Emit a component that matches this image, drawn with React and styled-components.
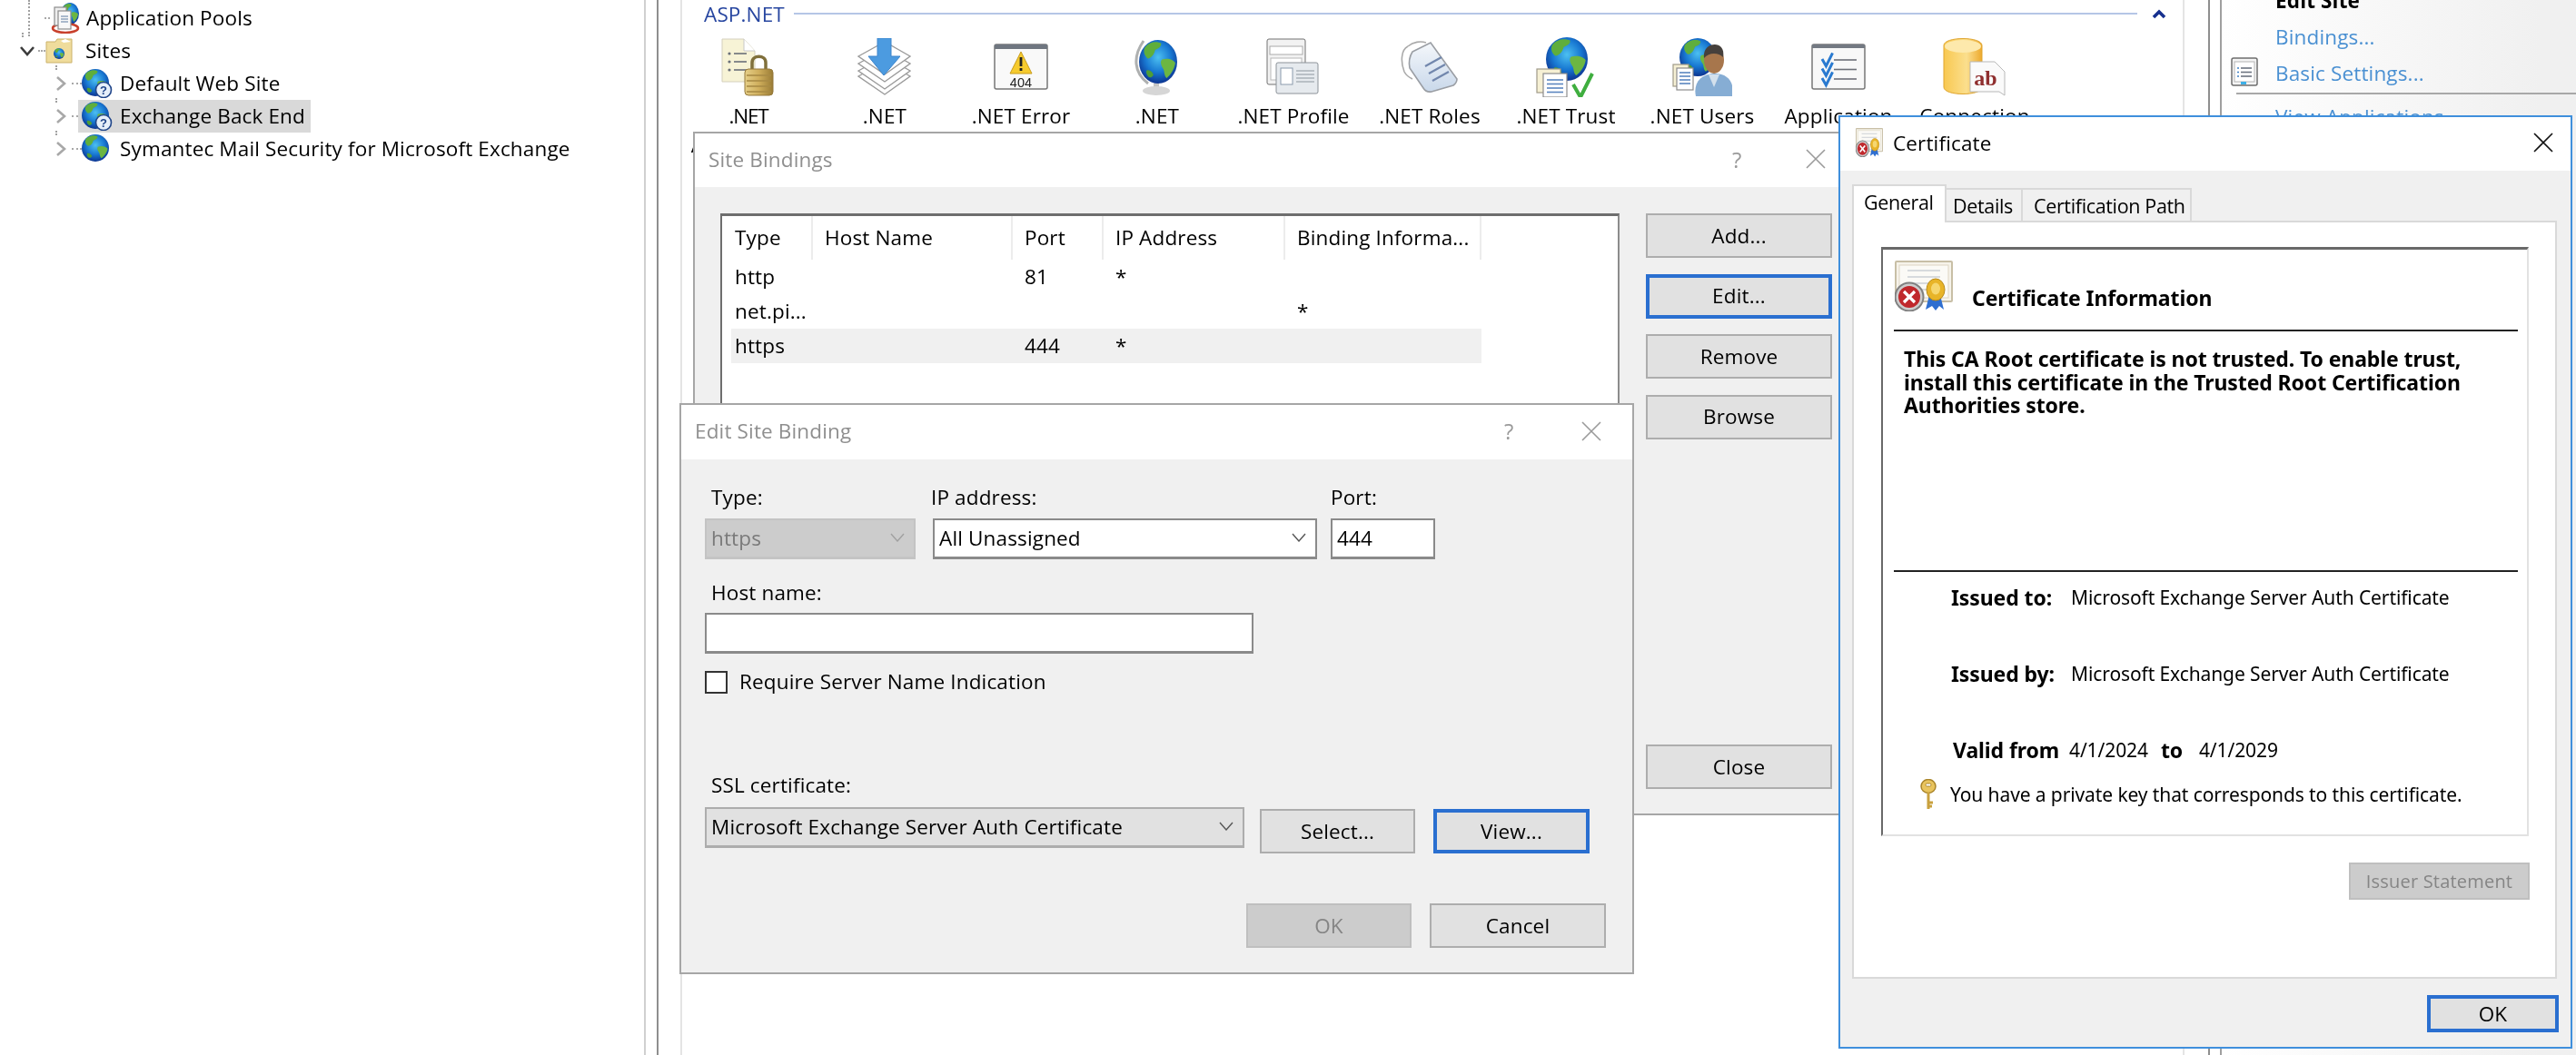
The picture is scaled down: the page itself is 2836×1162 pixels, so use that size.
import React from 'react';
import styled, { createGlobalStyle } from 'styled-components';

const GlobalStyle = createGlobalStyle`
  html, body { margin: 0; padding: 0; background: #fff; }
  body {
    font-family: 'Open Sans', 'Noto Sans', sans-serif;
    font-size: 22.5px;
    letter-spacing: 0.15px;
    color: #000;
  }
  * { box-sizing: border-box; }
`;

const Page = styled.div`
  position: relative;
  width: 2836px;
  height: 1162px;
  overflow: hidden;
  display: flex;
  background: #fff;
  filter: blur(0.5px);
`;

/* ---------- tree ---------- */
const TreePane = styled.div`
  flex: 0 0 711px;
  padding-top: 2px;
  border-right: 2px solid #d0d0d0;
`;

const TreeRow = styled.div`
  position: relative;
  height: 36px;
  display: flex;
  align-items: center;
  padding-left: ${(p) => p.$indent}px;

  &::before {
    content: '';
    position: absolute;
    left: ${(p) => p.$indent + 6}px;
    top: -2px;
    height: ${(p) => (p.$rail ? 40 : 3)}px;
    border-left: 2px dotted #a0a0a0;
  }
`;

const Twist = styled.span`
  flex: 0 0 24px;
  display: flex;
  justify-content: center;
`;

const Dots = styled.span`
  flex: 0 0 ${(p) => p.$w}px;
  border-top: 2px dotted #a8a8a8;
`;

const TreeLabel = styled.span`
  padding: 0 6px 0 0;
  line-height: 36px;
  margin-left: ${(p) => p.$gap}px;
`;

const SelectedNode = styled.span`
  display: flex;
  align-items: center;
  height: 36px;
  padding-left: 4px;
  margin-left: -4px;
  background: ${(p) => (p.$on ? '#d9d9d9' : 'transparent')};
`;

/* ---------- centre pane ---------- */
const MainPane = styled.div`
  flex: 0 0 1710px;
  margin-left: 12px;
  padding: 0 26px 0 24px;
  border-left: 2px solid #8f8f8f;
  border-right: 2px solid #8f8f8f;
`;

const Features = styled.div`
  height: 100%;
  border-left: 2px solid #e4e4e4;
  border-right: 2px solid #e4e4e4;
`;

const SectionHead = styled.div`
  height: 30px;
  display: flex;
  align-items: center;
  padding: 0 18px 0 24px;
  color: #2746a0;
`;

const SectionRule = styled.span`
  flex: 1;
  margin: 0 16px 0 10px;
  border-top: 2px solid #b5c6e6;
`;

const IconGrid = styled.div`
  display: grid;
  grid-template-columns: repeat(10, 150px);
  grid-auto-rows: 150px;
  margin: 5px 0 0 -2px;
`;

const Feature = styled.div`
  display: flex;
  flex-direction: column;
  align-items: center;
  text-align: center;
  padding-top: 7px;
`;

const FeatureIcon = styled.div`
  height: 64px;
  display: flex;
  align-items: center;
  justify-content: center;
`;

const FeatureLabel = styled.div`
  width: 146px;
  margin-top: 6px;
  line-height: 32px;
  letter-spacing: ${(p) => (p.$tight ? '-1.2px' : 'inherit')};
`;

/* ---------- actions ---------- */
const ActionsPane = styled.div`
  flex: 1;
  margin-left: 11px;
  border-left: 2px solid #a0a0a0;
  background: linear-gradient(to right, #fff 0%, #f0f0f0 90%);
  padding-left: 10px;
`;

const ActionRow = styled.div`
  height: 40px;
  display: flex;
  align-items: center;
  padding-left: 49px;
  position: relative;
  color: ${(p) => (p.$head ? '#000' : '#4a90d2')};
  font-weight: ${(p) => (p.$head ? 700 : 400)};
  margin-top: ${(p) => (p.$first ? -20 : 0)}px;
`;

const ActionIcon = styled.span`
  position: absolute;
  left: 0;
  top: 3px;
`;

const ActionRule = styled.div`
  height: 2px;
  margin: 2px 0 4px 6px;
  background: #a8a8a8;
`;

/* ---------- windows ---------- */
const Window = styled.div`
  position: absolute;
  left: ${(p) => p.$x}px;
  top: ${(p) => p.$y}px;
  width: ${(p) => p.$w}px;
  height: ${(p) => p.$h}px;
  display: flex;
  flex-direction: column;
  background: #f0f0f0;
  border: 2px solid ${(p) => (p.$active ? '#3f8fdc' : '#a6a6a6')};
`;

const TitleBar = styled.div`
  flex: 0 0 ${(p) => p.$h || 60}px;
  display: flex;
  align-items: center;
  background: #fff;
  padding: 0 ${(p) => p.$pr}px 3px ${(p) => p.$pl}px;
  color: ${(p) => (p.$active ? '#000' : '#8f8f8f')};
`;

const TitleText = styled.span`
  flex: 1;
  margin-left: ${(p) => p.$ml || 0}px;
`;

const TitleHelp = styled.span`
  width: ${(p) => p.$w}px;
  font-size: 24px;
  color: #9a9a9a;
`;

/* ---------- site bindings ---------- */
const BindingsBody = styled.div`
  flex: 1;
  display: flex;
  padding: 29px 0 27px 28px;
`;

const ListBox = styled.div`
  flex: 0 0 990px;
  height: 590px;
  padding-left: 10px;
  background: #fff;
  border-top: 3px solid #6e6e6e;
  border-left: 2px solid #6e6e6e;
  border-right: 2px solid #8c8c8c;
`;

const ListGrid = styled.div`
  display: grid;
  grid-template-columns: 90px 220px 100px 200px 216px;
  grid-template-rows: 48px;
  grid-auto-rows: 38px;
`;

const ColumnHead = styled.div`
  height: 48px;
  padding-left: 13px;
  line-height: 48px;
  border-right: 2px solid #ececec;
  &:first-child { padding-left: 4px; }
`;

const Cell = styled.div`
  padding-left: 13px;
  line-height: 38px;
  background: ${(p) => (p.$sel ? '#f0f0f0' : 'transparent')};
  &:nth-child(5n + 1) { padding-left: 4px; }
`;

const ButtonColumn = styled.div`
  flex: 0 0 205px;
  margin-left: 29px;
  display: flex;
  flex-direction: column;
  gap: 17.5px;
`;

const Button = styled.div`
  flex: 0 0 auto;
  width: ${(p) => p.$w}px;
  height: ${(p) => p.$h || 49}px;
  margin-top: ${(p) => p.$mt || 0}px;
  padding-bottom: 1px;
  display: flex;
  align-items: center;
  justify-content: center;
  background: ${(p) => (p.$off ? '#cccccc' : '#e1e1e1')};
  color: ${(p) => (p.$off ? '#858585' : '#000')};
  border: ${(p) => (p.$focus ? '4px solid #2a6fd0' : `2px solid ${p.$off ? '#bfbfbf' : '#adadad'}`)};
`;

const Spacer = styled.div`
  flex: 1;
`;

/* ---------- edit binding ---------- */
const EditBody = styled.div`
  flex: 1;
  padding: 29px 29px 0 26px;
`;

const FieldRow = styled.div`
  display: flex;
  align-items: flex-start;
  gap: ${(p) => p.$gap || 0}px;
  margin-top: ${(p) => p.$mt || 0}px;
`;

const Field = styled.div`
  width: ${(p) => p.$w}px;
  margin-left: ${(p) => p.$ml || 0}px;
`;

const FieldLabel = styled.div`
  height: 30px;
  line-height: 26px;
  margin: 0 0 ${(p) => p.$mb ?? 6}px ${(p) => p.$ml ?? 7}px;
`;

const Combo = styled.div`
  height: 45px;
  display: flex;
  align-items: center;
  justify-content: space-between;
  padding: 0 10px 2px 5px;
  background: ${(p) => (p.$tone === 'off' ? '#cccccc' : p.$tone === 'flat' ? '#e1e1e1' : '#fff')};
  color: ${(p) => (p.$tone === 'off' ? '#7a7a7a' : '#000')};
  border: 2px solid ${(p) => (p.$tone === 'off' ? '#c4c4c4' : p.$tone === 'flat' ? '#adadad' : '#8a8a8a')};
  border-bottom-width: 3px;
`;

const TextBox = styled(Combo)``;

const CheckRow = styled.div`
  display: flex;
  align-items: center;
  gap: 13px;
  height: 25px;
  margin-top: 19px;
`;

const CheckBox = styled.span`
  width: 25px;
  height: 25px;
  background: #fff;
  border: 2px solid #333;
`;

const CheckText = styled.span`
  margin-top: -3px;
`;

const ButtonFooter = styled.div`
  display: flex;
  justify-content: flex-end;
  gap: 20px;
  margin-top: 55px;
`;

/* ---------- certificate ---------- */
const CertBody = styled.div`
  flex: 1;
  display: flex;
  flex-direction: column;
  padding: 15px 13px 16px 13px;
`;

const Tabs = styled.div`
  display: flex;
  height: 40px;
  align-items: flex-end;
`;

const Tab = styled.div`
  height: ${(p) => (p.$on ? 42 : 36)}px;
  width: ${(p) => p.$w}px;
  padding-left: ${(p) => p.$pl}px;
  margin-bottom: ${(p) => (p.$on ? -2 : 0)}px;
  position: relative;
  z-index: ${(p) => (p.$on ? 2 : 0)};
  line-height: 36px;
  font-size: 21.5px;
  letter-spacing: -0.35px;
  background: ${(p) => (p.$on ? '#fff' : '#f0f0f0')};
  border: 2px solid #d9d9d9;
  border-width: 2px 2px 0 ${(p) => (p.$first ? 2 : 0)}px;
`;

const TabPanel = styled.div`
  width: 776px;
  height: 835px;
  padding: 27px 0 0 30px;
  background: #fff;
  border: 2px solid #d9d9d9;
`;

const InfoBox = styled.div`
  width: 713px;
  height: 649px;
  padding: 19px 0 0 13px;
  border-style: solid;
  border-width: 3px 2px 2px 2px;
  border-color: #696969 #e2e2e2 #e2e2e2 #696969;
  font-family: 'Noto Sans', sans-serif;
  font-size: 21px;
  letter-spacing: -0.1px;
`;

const InfoHead = styled.div`
  display: flex;
  align-items: flex-end;
  gap: 21px;
  height: 56px;
  font-size: 23px;
  font-weight: 700;
  line-height: 30px;
  padding-bottom: 7px;
`;

const InfoRule = styled.div`
  width: 687px;
  height: 2px;
  margin: ${(p) => p.$mt}px 0 0 -1px;
  background: #222;
`;

const InfoMessage = styled.div`
  width: 640px;
  height: 243px;
  margin: 18px 0 2px 10px;
  font-size: 23px;
  font-weight: 700;
  line-height: 25.7px;
`;

const InfoRows = styled.div`
  display: flex;
  flex-direction: column;
  gap: 54px;
  margin-top: 13px;
`;

const InfoRow = styled.div`
  display: flex;
  height: 30px;
  line-height: 30px;
  padding-left: ${(p) => p.$pl || 62}px;
`;

const InfoKey = styled.b`
  width: ${(p) => p.$w}px;
  margin-left: ${(p) => p.$ml || 0}px;
  flex: 0 0 auto;
  font-size: 23px;
`;

const KeyRow = styled.div`
  display: flex;
  align-items: center;
  height: 34px;
  gap: 15px;
  margin: 17px 0 0 28px;
`;

const IssuerRow = styled.div`
  display: flex;
  justify-content: flex-end;
  width: 714px;
  margin-top: 29px;
`;

const IssuerButton = styled(Button)`
  font-size: 20px;
  letter-spacing: 0.2px;
`;

const CertFooter = styled.div`
  display: flex;
  justify-content: flex-end;
  margin-top: 18px;
`;

/* ---------- drawings ---------- */
const Defs = () => (
  <svg width="0" height="0" style={{ position: 'absolute' }}>
    <defs>
      <radialGradient id="sea" cx="0.5" cy="0.4" r="0.62">
        <stop offset="0" stopColor="#4cc0f0" />
        <stop offset="0.55" stopColor="#1878d2" />
        <stop offset="1" stopColor="#0b2f8c" />
      </radialGradient>
      <linearGradient id="gold" x1="0" x2="1" y1="0" y2="0">
        <stop offset="0" stopColor="#e6cf88" />
        <stop offset="0.5" stopColor="#cfae5c" />
        <stop offset="1" stopColor="#9a7c35" />
      </linearGradient>
      <linearGradient id="can" x1="0" x2="1" y1="0" y2="0">
        <stop offset="0" stopColor="#f8c850" />
        <stop offset="0.6" stopColor="#fbdf8e" />
        <stop offset="1" stopColor="#eda92d" />
      </linearGradient>
      <linearGradient id="cloth" x1="0" x2="0" y1="0" y2="1">
        <stop offset="0" stopColor="#f4f7fb" />
        <stop offset="1" stopColor="#c9d8ea" />
      </linearGradient>
    </defs>
  </svg>
);

const Globe = ({ cx, cy, r, ry }) => {
  const h = ry || r;
  return (
    <g transform={`translate(${cx} ${cy}) scale(${r / 20} ${h / 20})`}>
      <circle r="20" fill="url(#sea)" />
      <path d="M-14-13c5-6 13-6 17-4 1 3-3 5-6 6-1 4-4 8-8 8-3-2-5-6-3-10z" fill="#5fae3c" />
      <path d="M4-2c6-2 12 0 14 3-1 6-5 11-9 14-3-2-2-7-4-9-2-3-3-6-1-8z" fill="#6cb642" />
      <path d="M-12 8c3-1 6 1 7 4-1 2-3 3-5 2-2-2-3-4-2-6z" fill="#4f9e36" />
    </g>
  );
};

const Sheet = ({ x, y, w, h, fill = '#fff', stroke = '#8c8c8c' }) => (
  <rect x={x} y={y} width={w} height={h} fill={fill} stroke={stroke} strokeWidth="1.2" />
);

const Lines = ({ x, y, w, n, step = 5, color = '#5b86c0', sw = 1.6 }) => (
  <g stroke={color} strokeWidth={sw}>
    {Array.from({ length: n }).map((_, i) => (
      <line key={i} x1={x} x2={x + w} y1={y + i * step} y2={y + i * step} />
    ))}
  </g>
);

const AuthIcon = () => (
  <svg width="60" height="64" viewBox="0 0 60 64">
    <path d="M1 1h24l12 13v34H1z" fill="#f7f3d6" stroke="#d4d0bd" />
    <path d="M25 1v13h12" fill="#fff" stroke="#c8c8c8" />
    <g fill="#6a6f78">
      <circle cx="9" cy="17" r="1.6" /><circle cx="9" cy="26" r="1.6" /><circle cx="9" cy="35" r="1.6" />
    </g>
    <Lines x={14} y={17} w={14} n={3} step={9} color="#6a6f78" />
    <path d="M34 36v-9c0-9 15-9 15 0v9" fill="none" stroke="#80703c" strokeWidth="3.5" />
    <rect x="26" y="34" width="31" height="29" rx="4" fill="url(#gold)" stroke="#94793c" />
    <Lines x={28} y={41} w={27} n={4} step={6} color="#a98b45" />
  </svg>
);

const Stack = ({ y }) => (
  <path d={`M1 ${y}L30 ${y - 16}L58 ${y}L30 ${y + 20}Z`} fill="#fff" stroke="#9a9a9a" strokeWidth="1.4" />
);

const CompileIcon = () => (
  <svg width="60" height="64" viewBox="0 0 60 64">
    <Stack y={42} /><Stack y={36} /><Stack y={28} /><Stack y={20} />
    <path d="M22 0h15v20h10L29 41 12 20h10z" fill="#4c9be0" stroke="#3d85cc" />
  </svg>
);

const ErrorIcon = () => (
  <svg width="60" height="52" viewBox="0 0 60 52">
    <rect x="1" y="1" width="58" height="49" rx="2" fill="#f9f9f9" stroke="#777" strokeWidth="1.5" />
    <rect x="1" y="1" width="58" height="5" fill="#6f7680" />
    <path d="M30 9L42 33H18z" fill="#f6cb2f" stroke="#c89b1d" />
    <rect x="28.6" y="15" width="2.8" height="10" fill="#222" /><rect x="28.6" y="27" width="2.8" height="3" fill="#222" />
    <text x="30" y="48" textAnchor="middle" fontFamily="'Liberation Sans', sans-serif" fontSize="14.5" fill="#222">404</text>
  </svg>
);

const GlobeIcon = () => (
  <svg width="50" height="64" viewBox="0 0 50 64">
    <path d="M10 3C-2 20-1 38 15 50" fill="none" stroke="#aeb0b0" strokeWidth="3" />
    <Globe cx={26} cy={26} r={21} ry={24} />
    <rect x="21" y="50" width="6" height="6" fill="#c4c4c4" />
    <ellipse cx="24" cy="58" rx="15" ry="5" fill="#d6d6d6" />
  </svg>
);

const ProfileIcon = () => (
  <svg width="60" height="64" viewBox="0 0 60 64">
    <rect x="1" y="1" width="42" height="50" rx="2" fill="#f2f2f2" stroke="#707070" />
    <rect x="4" y="9" width="36" height="9" fill="#fff" stroke="#aaa" />
    <rect x="5" y="22" width="34" height="24" fill="#fff" stroke="#b8b8b8" />
    <rect x="11" y="27" width="46" height="34" rx="2" fill="#e6eaee" stroke="#8c9298" />
    <rect x="16" y="33" width="13" height="18" fill="#fff" stroke="#8a9aac" />
    <Lines x={33} y={36} w={20} n={4} step={4} color="#9aa3ac" sw={1.2} />
  </svg>
);

const RolesIcon = () => (
  <svg width="64" height="58" viewBox="0 0 64 58">
    <path d="M8 6C0 10 0 24 4 34c2 4 5 6 9 8" fill="none" stroke="#a9a9a9" strokeWidth="1.6" />
    <path d="M8 6c6-5 14-6 20-4" fill="none" stroke="#a9a9a9" strokeWidth="1.6" />
    <path d="M13 12L33 2l29 40q0 4-4 7l-24 7q-6 1-9-4L10 30q-2-10 3-18z" fill="url(#cloth)" stroke="#9a9ea4" strokeWidth="1.6" />
    <g stroke="#7287ad" strokeWidth="2.2">
      <line x1="27" y1="28" x2="45" y2="18" /><line x1="31" y1="36" x2="49" y2="26" /><line x1="35" y1="44" x2="53" y2="34" />
    </g>
  </svg>
);

const CheckMark = ({ x, y, s = 1, color = '#3fae3f', w = 4 }) => (
  <path d={`M${x} ${y}l${8 * s} ${14 * s}l${13 * s} ${-26 * s}`} fill="none" stroke={color} strokeWidth={w} />
);

const TrustIcon = () => (
  <svg width="66" height="66" viewBox="0 0 66 66">
    <Globe cx={34} cy={24} r={23} ry={24} />
    <Sheet x={1} y={35} w={26} h={26} fill="#f6f0d4" stroke="#a09a88" />
    <Sheet x={8} y={40} w={26} h={26} />
    <Lines x={12} y={47} w={18} n={4} step={4.5} />
    <CheckMark x={41} y={52} s={1} />
  </svg>
);

const UsersIcon = () => (
  <svg width="66" height="64" viewBox="0 0 66 64">
    <Globe cx={28} cy={21} r={20} ry={21} />
    <Sheet x={1} y={29} w={17} h={24} fill="#f6f0d4" stroke="#a09a88" />
    <Sheet x={5} y={33} w={18} h={24} />
    <Lines x={8} y={38} w={12} n={4} step={4} />
    <path d="M26 64c-3-14 5-25 21-25s22 12 19 25z" fill="#86add4" />
    <path d="M40 40l6 14 6-14z" fill="#d3e0ec" />
    <ellipse cx="46" cy="24" rx="11" ry="15" fill="#a7764c" />
    <path d="M35 22c-1-12 7-15 12-15s11 4 9 14c-5-5-15-6-21 1z" fill="#46403c" />
  </svg>
);

const ListIcon = () => (
  <svg width="60" height="52" viewBox="0 0 60 52">
    <rect x="1" y="1" width="58" height="49" rx="2" fill="#f8f8f8" stroke="#777" strokeWidth="1.5" />
    <rect x="1" y="1" width="58" height="4" fill="#737982" />
    <Lines x={25} y={18} w={25} n={3} step={10.5} color="#6d7078" />
    <CheckMark x={12} y={17} s={0.55} color="#2a7ad0" w={3} />
    <CheckMark x={12} y={27.5} s={0.55} color="#2a7ad0" w={3} />
    <CheckMark x={12} y={38} s={0.55} color="#2a7ad0" w={3} />
  </svg>
);

const ConnectionIcon = () => (
  <svg width="70" height="64" viewBox="0 0 70 64">
    <path d="M1 8c0-10 42-10 42 0v46c0 10-42 10-42 0z" fill="url(#can)" stroke="#dfa52f" />
    <ellipse cx="22" cy="9" rx="20" ry="7" fill="#fde9ac" />
    <path d="M30 26h27l11 11v26l-6-4H30z" fill="#fafafa" stroke="#b8b8b8" />
    <text x="47" y="52" textAnchor="middle" fontFamily="'Liberation Serif', serif" fontWeight="700" fontSize="24" fill="#8f2e2e">ab</text>
  </svg>
);

const PoolsIcon = () => (
  <svg width="34" height="34" viewBox="0 0 34 34">
    <Globe cx={22} cy={12} r={10} ry={12} />
    <ellipse cx="17" cy="28" rx="14" ry="5" fill="none" stroke="#c8402c" strokeWidth="2.5" />
    <Sheet x={5} y={5} w={13} h={20} fill="#eeeeee" />
    <Sheet x={9} y={9} w={14} h={20} fill="#f8f8f8" />
    <Lines x={12} y={15} w={8} n={3} step={3} color="#5c7aa0" sw={1} />
  </svg>
);

const FolderIcon = () => (
  <svg width="30" height="28" viewBox="0 0 30 28">
    <path d="M1 4h10l2-3h16v26H1z" fill="#efdc9c" stroke="#cbb26a" />
    <path d="M17 3l5-2 6 3-8 1z" fill="#fff" />
    <Globe cx={15} cy={17} r={6} />
  </svg>
);

const SiteIcon = ({ unknown }) => (
  <svg width="34" height="32" viewBox="0 0 34 32">
    <Globe cx={15} cy={15} r={15} />
    {unknown && (
      <g>
        <circle cx="24" cy="23" r="8.5" fill="#e6effa" stroke="#21468a" strokeWidth="1.6" />
        <text x="24" y="28" textAnchor="middle" fontFamily="'Liberation Sans', sans-serif" fontSize="13" fontWeight="700" fill="#21468a">?</text>
      </g>
    )}
  </svg>
);

const TwistDown = () => (
  <svg width="18" height="12" viewBox="0 0 18 12">
    <path d="M2 2l7 8 7-8" fill="none" stroke="#3c3c3c" strokeWidth="2.6" />
  </svg>
);

const TwistRight = () => (
  <svg width="12" height="18" viewBox="0 0 12 18">
    <path d="M2 2l8 7-8 7" fill="none" stroke="#a8a8a8" strokeWidth="2.6" />
  </svg>
);

const FoldUp = () => (
  <svg width="16" height="12" viewBox="0 0 16 12">
    <path d="M2 10l6-6 6 6" fill="none" stroke="#17308f" strokeWidth="3.6" />
  </svg>
);

const ComboArrow = ({ color = '#555' }) => (
  <svg width="16" height="10" viewBox="0 0 16 10">
    <path d="M1 1l7 8 7-8" fill="none" stroke={color} strokeWidth="1.4" />
  </svg>
);

const CloseX = ({ color = '#9a9a9a', size = 22 }) => (
  <svg width={size} height={size} viewBox="0 0 22 22">
    <path d="M1 1l20 20M21 1L1 21" stroke={color} strokeWidth="1.6" />
  </svg>
);

const SettingsIcon = () => (
  <svg width="30" height="32" viewBox="0 0 30 32">
    <rect x="1" y="1" width="28" height="30" rx="2" fill="#f4f4f4" stroke="#6d6d6d" strokeWidth="1.5" />
    <rect x="4" y="5" width="22" height="22" fill="#fff" stroke="#b4b4b4" />
    <Lines x={11} y={12} w={12} n={3} step={4.5} color="#6c7480" />
    <Lines x={7} y={12} w={2} n={3} step={4.5} color="#3c7fc4" />
    <rect x="11" y="27" width="6" height="3" fill="#3cb0e8" />
  </svg>
);

const CertIcon = ({ w, h }) => (
  <svg width={w} height={h} viewBox="0 0 64 56" preserveAspectRatio="none">
    <rect x="1" y="1" width="62" height="44" rx="1" fill="#f6f3ea" stroke="#c8bfa6" strokeWidth="2" />
    <rect x="5" y="5" width="54" height="36" fill="#fbfaf6" stroke="#ddd6c4" />
    <Lines x={14} y={11} w={36} n={4} step={7} color="#b4bac4" sw={1.2} />
    <path d="M38 38l-4 16 7-4 4 5 4-5 5 4-4-16z" fill="#2f6fd0" />
    <ellipse cx="45" cy="32" rx="10" ry="12" fill="#e8b428" stroke="#b88a18" />
    <ellipse cx="45" cy="31" rx="5" ry="6.5" fill="#f6d770" />
    <circle cx="16" cy="40" r="15.5" fill="#cdcdcd" stroke="#808080" strokeWidth="2" />
    <circle cx="16" cy="40" r="12" fill="#c0282c" />
    <path d="M10 34l12 12M22 34L10 46" stroke="#fff" strokeWidth="3.2" />
  </svg>
);

const KeyIcon = () => (
  <svg width="18" height="34" viewBox="0 0 18 34">
    <ellipse cx="9" cy="8" rx="8" ry="7.5" fill="#e9c45e" stroke="#a9842a" strokeWidth="1.5" />
    <rect x="6" y="5" width="6" height="3" rx="1.5" fill="#fff" stroke="#a9842a" />
    <path d="M9 15v18M9 26h5M9 30h4" stroke="#c9a13e" strokeWidth="3" />
  </svg>
);

const features = [
  { label: '.NET Authorization Rules', icon: <AuthIcon />, tight: true },
  { label: '.NET Compilation', icon: <CompileIcon /> },
  { label: '.NET Error Pages', icon: <ErrorIcon /> },
  { label: '.NET Globalization', icon: <GlobeIcon /> },
  { label: '.NET Profile', icon: <ProfileIcon /> },
  { label: '.NET Roles', icon: <RolesIcon /> },
  { label: '.NET Trust Levels', icon: <TrustIcon /> },
  { label: '.NET Users', icon: <UsersIcon /> },
  { label: 'Application Settings', icon: <ListIcon /> },
  { label: 'Connection Strings', icon: <ConnectionIcon /> },
  { label: 'Machine Key', icon: null, tight: true },
];

const bindings = [
  ['http', '', '81', '*', ''],
  ['net.pi...', '', '', '', '*'],
  ['https', '', '444', '*', ''],
];

const SiteBindings = () => (
  <Window $x={763} $y={145} $w={1270} $h={753}>
    <TitleBar $h={59} $pl={15} $pr={21}>
      <TitleText>Site Bindings</TitleText>
      <TitleHelp $w={81}>?</TitleHelp>
      <CloseX />
    </TitleBar>
    <BindingsBody>
      <ListBox>
        <ListGrid>
          {['Type', 'Host Name', 'Port', 'IP Address', 'Binding Informa...'].map((h) => (
            <ColumnHead key={h}>{h}</ColumnHead>
          ))}
          {bindings.map((row, r) =>
            row.map((c, i) => (
              <Cell key={`${r}-${i}`} $sel={r === 2}>{c}</Cell>
            ))
          )}
        </ListGrid>
      </ListBox>
      <ButtonColumn>
        <Button $w={205}>Add...</Button>
        <Button $w={205} $focus>Edit...</Button>
        <Button $w={205}>Remove</Button>
        <Button $w={205}>Browse</Button>
        <Spacer />
        <Button $w={205}>Close</Button>
      </ButtonColumn>
    </BindingsBody>
  </Window>
);

const EditBinding = () => (
  <Window $x={748} $y={444} $w={1051} $h={629}>
    <TitleBar $pl={15} $pr={34}>
      <TitleText>Edit Site Binding</TitleText>
      <TitleHelp $w={85}>?</TitleHelp>
      <CloseX />
    </TitleBar>
    <EditBody>
      <FieldRow>
        <Field $w={232}>
          <FieldLabel>Type:</FieldLabel>
          <Combo $tone="off">https<ComboArrow color="#a0a0a0" /></Combo>
        </Field>
        <Field $w={423} $ml={19}>
          <FieldLabel $ml={-2}>IP address:</FieldLabel>
          <Combo>All Unassigned<ComboArrow /></Combo>
        </Field>
        <Field $w={115} $ml={15}>
          <FieldLabel $ml={0}>Port:</FieldLabel>
          <TextBox>444</TextBox>
        </Field>
      </FieldRow>
      <FieldRow $mt={24}>
        <Field $w={604}>
          <FieldLabel $mb={5}>Host name:</FieldLabel>
          <TextBox />
        </Field>
      </FieldRow>
      <CheckRow>
        <CheckBox />
        <CheckText>Require Server Name Indication</CheckText>
      </CheckRow>
      <FieldRow $mt={88}>
        <Field $w={594}>
          <FieldLabel $mb={7}>SSL certificate:</FieldLabel>
          <Combo $tone="flat">Microsoft Exchange Server Auth Certificate<ComboArrow /></Combo>
        </Field>
        <FieldRow $mt={39} $gap={20}>
          <Field $w={171} $ml={17}><Button $w={171}>Select...</Button></Field>
          <Field $w={172}><Button $w={172} $focus>View...</Button></Field>
        </FieldRow>
      </FieldRow>
      <ButtonFooter>
        <Button $w={182} $off>OK</Button>
        <Button $w={194}>Cancel</Button>
      </ButtonFooter>
    </EditBody>
  </Window>
);

const Certificate = () => (
  <Window $x={2024} $y={127} $w={808} $h={1028} $active>
    <TitleBar $h={59} $active $pl={17} $pr={19}>
      <CertIcon w={30} h={32} />
      <TitleText $ml={11}>Certificate</TitleText>
      <CloseX color="#111" />
    </TitleBar>
    <CertBody>
      <Tabs>
        <Tab $on $first $w={104} $pl={11}>General</Tab>
        <Tab $w={84} $pl={7}>Details</Tab>
        <Tab $w={186} $pl={12}>Certification Path</Tab>
      </Tabs>
      <TabPanel>
        <InfoBox>
          <InfoHead>
            <CertIcon w={64} h={56} />
            <span>Certificate Information</span>
          </InfoHead>
          <InfoRule $mt={13} />
          <InfoMessage>
            This CA Root certificate is not trusted. To enable trust, install this
            certificate in the Trusted Root Certification Authorities store.
          </InfoMessage>
          <InfoRule $mt={0} />
          <InfoRows>
            <InfoRow>
              <InfoKey $w={132}>Issued to:</InfoKey>
              Microsoft Exchange Server Auth Certificate
            </InfoRow>
            <InfoRow>
              <InfoKey $w={132}>Issued by:</InfoKey>
              Microsoft Exchange Server Auth Certificate
            </InfoRow>
            <InfoRow $pl={64}>
              <InfoKey $w={128}>Valid from</InfoKey>
              4/1/2024
              <InfoKey $w={42} $ml={14}>to</InfoKey>
              4/1/2029
            </InfoRow>
          </InfoRows>
          <KeyRow>
            <KeyIcon />
            You have a private key that corresponds to this certificate.
          </KeyRow>
        </InfoBox>
        <IssuerRow>
          <IssuerButton $w={199} $h={41} $off>Issuer Statement</IssuerButton>
        </IssuerRow>
      </TabPanel>
      <CertFooter>
        <Button $w={145} $h={41} $focus>OK</Button>
      </CertFooter>
    </CertBody>
  </Window>
);

const App = () => (
  <>
    <GlobalStyle />
    <Page>
      <Defs />
      <TreePane>
        <TreeRow $indent={25} $rail>
          <Twist />
          <Dots $w={6} />
          <PoolsIcon />
          <TreeLabel $gap={6}>Application Pools</TreeLabel>
        </TreeRow>
        <TreeRow $indent={18}>
          <Twist><TwistDown /></Twist>
          <Dots $w={8} />
          <FolderIcon />
          <TreeLabel $gap={14}>Sites</TreeLabel>
        </TreeRow>
        <TreeRow $indent={55}>
          <Twist><TwistRight /></Twist>
          <Dots $w={11} />
          <SiteIcon unknown />
          <TreeLabel $gap={8}>Default Web Site</TreeLabel>
        </TreeRow>
        <TreeRow $indent={55}>
          <Twist><TwistRight /></Twist>
          <Dots $w={11} />
          <SelectedNode $on>
            <SiteIcon unknown />
            <TreeLabel $gap={8}>Exchange Back End</TreeLabel>
          </SelectedNode>
        </TreeRow>
        <TreeRow $indent={55}>
          <Twist><TwistRight /></Twist>
          <Dots $w={11} />
          <SiteIcon />
          <TreeLabel $gap={8}>Symantec Mail Security for Microsoft Exchange</TreeLabel>
        </TreeRow>
      </TreePane>

      <MainPane>
        <Features>
          <SectionHead>
            ASP.NET
            <SectionRule />
            <FoldUp />
          </SectionHead>
          <IconGrid>
            {features.map((f) => (
              <Feature key={f.label}>
                <FeatureIcon>{f.icon}</FeatureIcon>
                <FeatureLabel $tight={f.tight}>{f.label}</FeatureLabel>
              </Feature>
            ))}
          </IconGrid>
        </Features>
      </MainPane>

      <ActionsPane>
        <ActionRow $head $first>Edit Site</ActionRow>
        <ActionRow>Bindings...</ActionRow>
        <ActionRow>
          <ActionIcon><SettingsIcon /></ActionIcon>
          Basic Settings...
        </ActionRow>
        <ActionRule />
        <ActionRow>View Applications</ActionRow>
      </ActionsPane>

      <SiteBindings />
      <EditBinding />
      <Certificate />
    </Page>
  </>
);

export default App;
